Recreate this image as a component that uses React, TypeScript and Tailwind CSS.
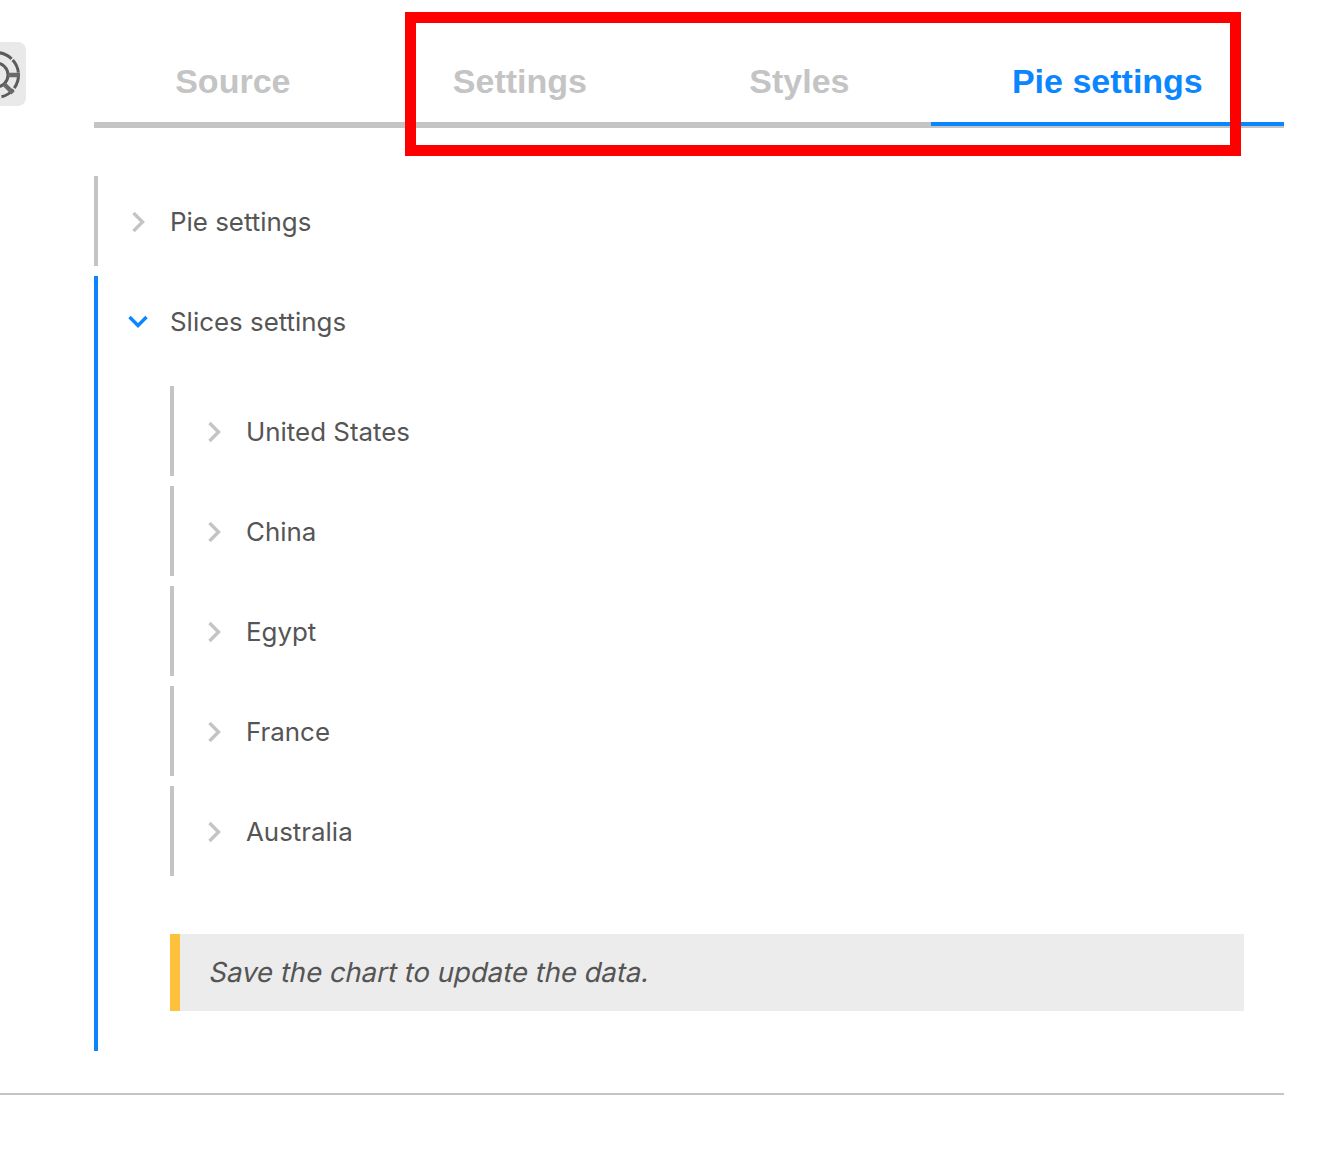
const TABS = ["Source", "Settings", "Styles", "Pie settings"];
const ACTIVE_TAB = "Pie settings";
const COUNTRIES = ["United States", "China", "Egypt", "France", "Australia"];

const ChevronRight = () => (
  <svg width="24" height="24" viewBox="0 0 24 24" fill="none" className="mt-[2px] shrink-0">
    <path d="M7.5 3 16.5 12 7.5 21" stroke="#c4c4c4" strokeWidth="3.4" />
  </svg>
);

const ChevronDown = () => (
  <svg width="24" height="24" viewBox="0 0 24 24" fill="none" className="mt-[2px] shrink-0">
    <path d="M3.5 7 12 15.5 20.5 7" stroke="#0a86ff" strokeWidth="3.4" />
  </svg>
);

const SteeringWheel = () => (
  <svg width="26" height="64" viewBox="0 0 26 64" fill="none">
    <circle cx="-4" cy="33" r="22.5" stroke="#5c5c5c" strokeWidth="3" strokeDasharray="14 1.5" />
    <circle cx="-4" cy="33" r="12" stroke="#5c5c5c" strokeWidth="3" />
    <path d="M8 33H20" stroke="#6a6a6a" strokeWidth="4.5" />
    <path d="M4 42 13 51" stroke="#6a6a6a" strokeWidth="4.5" />
  </svg>
);

const Row = ({ label }: { label: string }) => (
  <div className="flex h-[90px] items-center border-l-4 border-[#c4c4c4] pl-[28px]">
    <ChevronRight />
    <span className="ml-[20px] mt-[2px] text-[25.9px] text-[#555555]">{label}</span>
  </div>
);

export default function App() {
  return (
    <div className="relative flex h-[1168px] overflow-hidden bg-white font-['Inter',sans-serif]">
      <aside className="w-[94px] shrink-0 pt-[42px]">
        <div className="h-[64px] w-[26px] overflow-hidden rounded-r-lg bg-[#e9e9e9]">
          <SteeringWheel />
        </div>
      </aside>

      <main className="w-[1190px] shrink-0 pt-[40px]">
        <nav className="flex items-start border-b-[6px] border-[#c4c4c4]">
          {TABS.map((tab) => (
            <div
              key={tab}
              className={
                tab === ACTIVE_TAB
                  ? "-mb-[4px] box-content flex h-[82px] flex-auto items-center justify-center border-b-4 border-[#0a86ff] font-['Liberation_Sans',sans-serif] text-[34px] font-bold text-[#0a86ff]"
                  : "flex h-[82px] flex-auto items-center justify-center font-['Liberation_Sans',sans-serif] text-[34px] font-bold text-[#c4c4c4]"
              }
            >
              {tab}
            </div>
          ))}
        </nav>

        <div className="mt-[48px] flex flex-col gap-[10px]">
          <Row label="Pie settings" />

          <section className="h-[775px] border-l-4 border-[#0a86ff] pr-[40px]">
            <div className="flex h-[90px] items-center pl-[28px]">
              <ChevronDown />
              <span className="ml-[20px] mt-[2px] text-[25.9px] text-[#555555]">Slices settings</span>
            </div>

            <div className="ml-[72px] mt-[20px] flex flex-col gap-[10px]">
              {COUNTRIES.map((country) => (
                <Row key={country} label={country} />
              ))}
            </div>

            <div className="ml-[72px] mt-[58px] flex h-[77px] items-center border-l-[10px] border-[#fdc13b] bg-[#ececec] pl-[30px] text-[27.5px] text-[#555555]">
              <span className="inline-block -skew-x-[12deg]">Save the chart to update the data.</span>
            </div>
          </section>
        </div>

        <div className="-ml-[94px] mt-[42px] h-[2px] w-[1284px] bg-[#c4c4c4]" />
      </main>

      <div className="pointer-events-none absolute left-[405px] top-[12px] h-[144px] w-[836px] border-[11.5px] border-[#ff0000]" />
    </div>
  );
}
